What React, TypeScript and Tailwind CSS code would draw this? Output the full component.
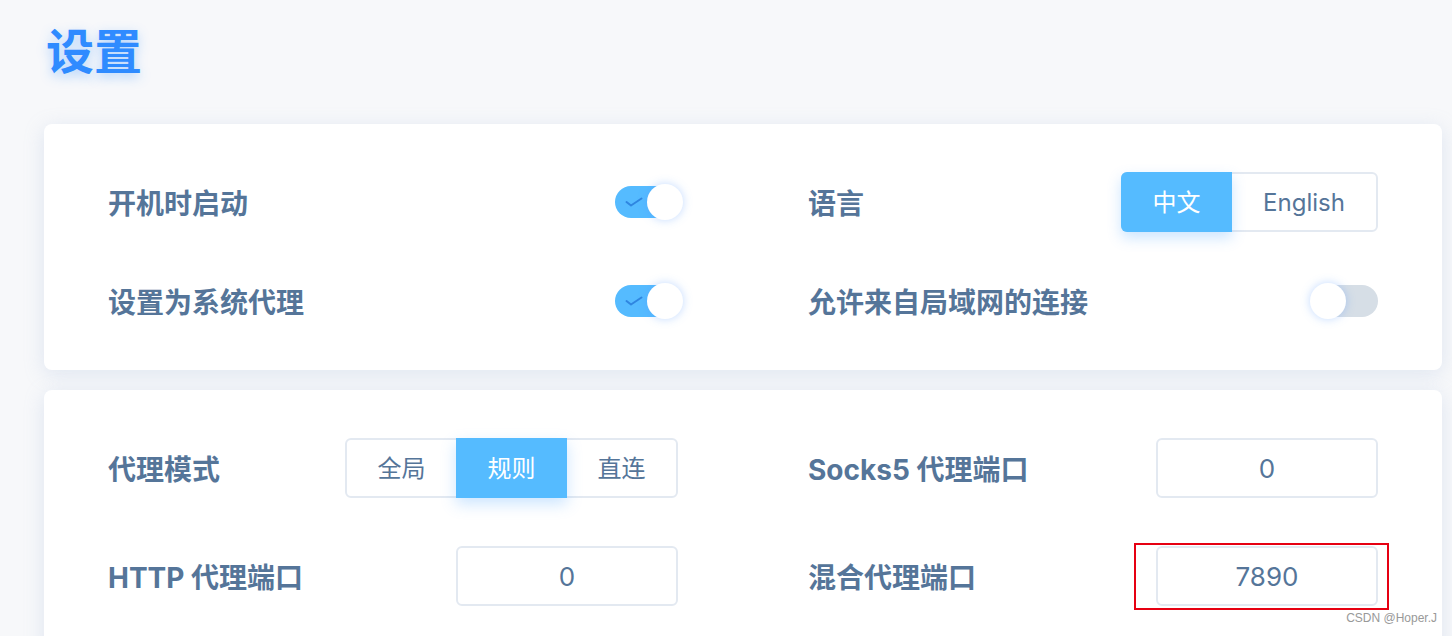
import React from "react";

const FONT = { fontFamily: 'Inter, "Noto Sans CJK SC", "Noto Sans", sans-serif' };

function Label({ children }: { children: React.ReactNode }) {
  return <span className="pt-[3px] text-[28px] font-bold text-[#557599]">{children}</span>;
}

function Toggle({ on }: { on: boolean }) {
  return (
    <div className={on ? "relative mr-[-2px] h-[32px] w-[65px]" : "relative h-[32px] w-[66px]"}>
      <div className={on ? "h-full w-full rounded-full bg-[#55bbff]" : "h-full w-full rounded-full bg-[#d6dee6]"} />
      {on && (
        <svg viewBox="0 0 18 10" className="absolute top-[11px] left-[10px] h-[10px] w-[18px]" fill="none">
          <polyline points="1.5,5 6,8.5 16.5,1.5" stroke="#2f86e0" strokeWidth="2" strokeLinecap="round" strokeLinejoin="round" />
        </svg>
      )}
      <div
        className={
          on
            ? "absolute top-[-2px] right-[-3px] h-[36px] w-[36px] rounded-full bg-white shadow-[0_0_10px_rgba(80,150,255,0.35)]"
            : "absolute top-[-2px] left-[-2px] h-[36px] w-[36px] rounded-full bg-white shadow-[0_0_10px_rgba(80,150,255,0.35)]"
        }
      />
    </div>
  );
}

function Segmented({ items, active, widths }: { items: string[]; active: number; widths: string[] }) {
  return (
    <div className="flex h-[60px] rounded-md border-2 border-[#e3e9f1] bg-white">
      {items.map((it, i) => (
        <div
          key={it}
          className={
            i === active
              ? `${widths[i]} -my-[2px] flex items-center justify-center pt-[2px] bg-[#55bbff] text-[24px] text-white shadow-[0_6px_14px_rgba(85,170,255,0.3)] ${i === 0 ? "-ml-[2px] rounded-l-md" : ""}`
              : `${widths[i]} flex items-center justify-center pt-[2px] text-[24px] text-[#557599]`
          }
        >
          {it}
        </div>
      ))}
    </div>
  );
}

function PortInput({ value }: { value: string }) {
  return (
    <div className="flex h-[60px] w-[222px] items-center justify-center rounded-md border-2 border-[#e3e9f1] bg-white text-[26px] text-[#557599]">
      {value}
    </div>
  );
}

function Row({ label, children }: { label: string; children: React.ReactNode }) {
  return (
    <div className="flex h-[60px] items-center justify-between">
      <Label>{label}</Label>
      {children}
    </div>
  );
}

export default function App() {
  return (
    <div className="relative h-[636px] overflow-hidden bg-[#f7f8fa] pt-[20px] pr-[10px] pl-[44px]" style={FONT}>
      <h1 className="mb-[40px] pl-[2px] text-[48px] leading-[64px] font-bold text-[#2f8bff] [text-shadow:0_4px_12px_rgba(47,139,255,0.35)]">
        设置
      </h1>

      <div className="rounded-lg bg-white pt-[48px] pr-[64px] pb-[39px] pl-[64px] shadow-[0_4px_20px_rgba(150,175,215,0.25)]">
        <div className="grid grid-cols-2 gap-x-[130px] gap-y-[39px]">
          <Row label="开机时启动">
            <Toggle on />
          </Row>
          <Row label="语言">
            <Segmented items={["中文", "English"]} active={0} widths={["w-[111px]", "w-[144px]"]} />
          </Row>
          <Row label="设置为系统代理">
            <Toggle on />
          </Row>
          <Row label="允许来自局域网的连接">
            <Toggle on={false} />
          </Row>
        </div>
      </div>

      <div className="mt-[20px] rounded-lg bg-white pt-[48px] pr-[64px] pb-[48px] pl-[64px] shadow-[0_4px_20px_rgba(150,175,215,0.25)]">
        <div className="grid grid-cols-2 gap-x-[130px] gap-y-[48px]">
          <Row label="代理模式">
            <Segmented items={["全局", "规则", "直连"]} active={1} widths={["w-[109px]", "w-[111px]", "w-[109px]"]} />
          </Row>
          <Row label="Socks5 代理端口">
            <PortInput value="0" />
          </Row>
          <Row label="HTTP 代理端口">
            <PortInput value="0" />
          </Row>
          <Row label="混合代理端口">
            <div className="relative">
              <PortInput value="7890" />
              <div className="pointer-events-none absolute top-[-3px] right-[-11px] bottom-[-4px] left-[-22px] border-2 border-[#e60012]" />
            </div>
          </Row>
        </div>
      </div>

      <span className="absolute right-[15px] bottom-[9px] text-[12px] text-[#999]" style={{ fontFamily: '"Liberation Sans", Arial, sans-serif' }}>
        CSDN @Hoper.J
      </span>
    </div>
  );
}
